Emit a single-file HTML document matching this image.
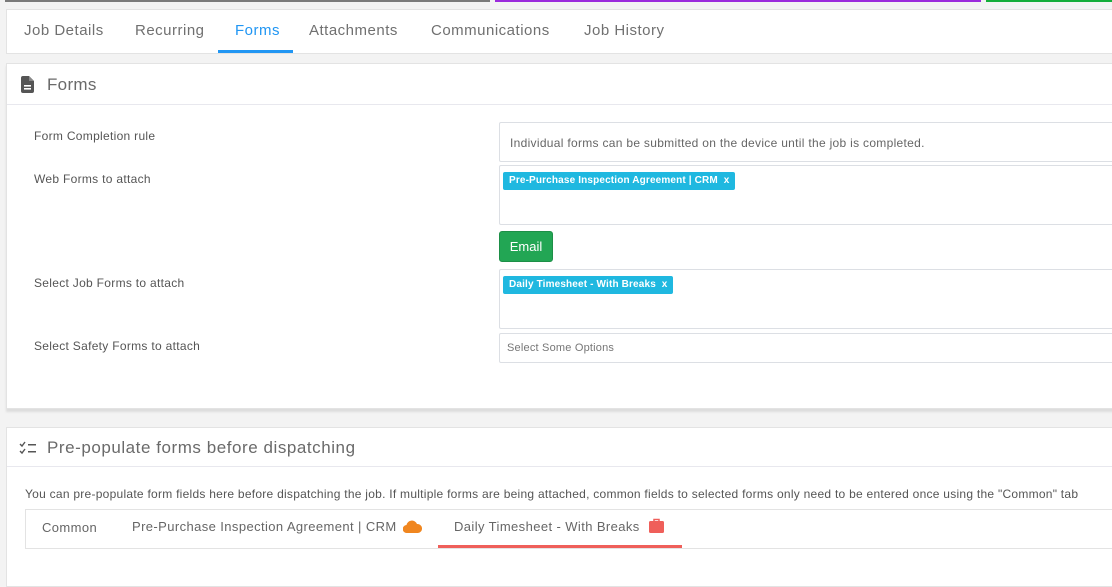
<!DOCTYPE html>
<html><head><style>
*{margin:0;padding:0;box-sizing:border-box}
body{width:1112px;height:574px;background:#f3f3f3;position:relative;overflow:hidden;font-family:"Liberation Sans",sans-serif}
.a{position:absolute}
.t{font-size:15px;color:#707070;top:22px;white-space:nowrap;letter-spacing:.5px}
.lbl{font-size:12px;color:#555;left:34px;white-space:nowrap;letter-spacing:.3px}
.box{left:499px;width:640px;border:1px solid #dcdfe4;background:#fff;border-radius:2px}
.tag{background:#1fb8e0;color:#fff;font-size:10px;font-weight:bold;height:18px;line-height:18px;padding:0 6px;border-radius:2px;white-space:nowrap;letter-spacing:.15px}
</style></head><body>
<div class="a" style="left:5px;top:0;width:485px;height:2px;background:#7a7a7a"></div>
<div class="a" style="left:495px;top:0;width:486px;height:2px;background:#9b2bdc"></div>
<div class="a" style="left:986px;top:0;width:126px;height:2px;background:#14ad3a"></div>

<div class="a" style="left:6px;top:9px;width:1120px;height:45px;background:#fff;border:1px solid #e3e3e3"></div>
<div class="a t" style="left:24px">Job Details</div>
<div class="a t" style="left:135px">Recurring</div>
<div class="a t" style="left:235px;color:#2196f3">Forms</div>
<div class="a t" style="left:309px">Attachments</div>
<div class="a t" style="left:431px">Communications</div>
<div class="a t" style="left:584px">Job History</div>
<div class="a" style="left:218px;top:50px;width:75px;height:3px;background:#2196f3"></div>

<div class="a" style="left:6px;top:63px;width:1120px;height:346px;background:#fff;border:1px solid #e3e3e3;box-shadow:0 3px 2px #ddd"></div>
<div class="a" style="left:7px;top:104px;width:1110px;height:1px;background:#e8e8ee"></div>
<svg class="a" style="left:21px;top:76px" width="13" height="17" viewBox="0 0 13 17"><path d="M2 0h6l5 5v10a2 2 0 0 1-2 2H2a2 2 0 0 1-2-2V2a2 2 0 0 1 2-2z" fill="#555"/><path d="M8 0v5h5" fill="#888"/><rect x="3" y="9" width="7" height="1.6" fill="#fff"/><rect x="3" y="12" width="7" height="1.6" fill="#fff"/></svg>
<div class="a" style="left:47px;top:75px;font-size:17px;color:#6a6a6a;letter-spacing:.3px">Forms</div>

<div class="a lbl" style="top:129px">Form Completion rule</div>
<div class="a lbl" style="top:172px">Web Forms to attach</div>
<div class="a lbl" style="top:276px">Select Job Forms to attach</div>
<div class="a lbl" style="top:339px">Select Safety Forms to attach</div>

<div class="a box" style="top:122px;height:40px"></div>
<div class="a" style="left:510px;top:136px;font-size:12px;color:#666;letter-spacing:.3px;white-space:nowrap">Individual forms can be submitted on the device until the job is completed.</div>
<div class="a box" style="top:165px;height:60px"></div>
<div class="a tag" style="left:503px;top:172px">Pre-Purchase Inspection Agreement | CRM &nbsp;x</div>
<div class="a" style="left:499px;top:231px;width:54px;height:31px;background:#22a654;border:1px solid #1d8f47;border-radius:3px;color:#fff;font-size:13px;line-height:29px;text-align:center">Email</div>
<div class="a box" style="top:269px;height:60px"></div>
<div class="a tag" style="left:503px;top:276px">Daily Timesheet - With Breaks &nbsp;x</div>
<div class="a box" style="top:333px;height:30px"></div>
<div class="a" style="left:507px;top:342px;font-size:11px;color:#777;letter-spacing:.2px">Select Some Options</div>

<div class="a" style="left:6px;top:427px;width:1120px;height:160px;background:#fff;border:1px solid #e3e3e3"></div>
<div class="a" style="left:7px;top:466px;width:1110px;height:1px;background:#e8e8ee"></div>
<svg class="a" style="left:19px;top:441px" width="18" height="14" viewBox="0 0 18 14"><path d="M1 3l2 2 3-4M1 10l2 2 3-4" stroke="#555" stroke-width="1.4" fill="none"/><rect x="9" y="3" width="8" height="1.5" fill="#555"/><rect x="9" y="10" width="8" height="1.5" fill="#555"/></svg>
<div class="a" style="left:47px;top:438px;font-size:17px;color:#6a6a6a;letter-spacing:.55px;white-space:nowrap">Pre-populate forms before dispatching</div>
<div class="a" style="left:25px;top:487px;font-size:12px;color:#555;white-space:nowrap;letter-spacing:.26px">You can pre-populate form fields here before dispatching the job. If multiple forms are being attached, common fields to selected forms only need to be entered once using the "Common" tab</div>
<div class="a" style="left:25px;top:509px;width:1100px;height:40px;border:1px solid #e3e3e3;background:#fff"></div>
<div class="a" style="left:42px;top:520px;font-size:13px;color:#666;letter-spacing:.4px">Common</div>
<div class="a" style="left:132px;top:519px;font-size:13px;color:#666;white-space:nowrap;letter-spacing:.4px">Pre-Purchase Inspection Agreement | CRM</div>
<svg class="a" style="left:403px;top:520px" width="19" height="13" viewBox="0 0 19 13"><path d="M4 13a4 4 0 0 1-.5-8A5.5 5.5 0 0 1 14 4a4.5 4.5 0 0 1 1 9z" fill="#f0861f"/></svg>
<div class="a" style="left:454px;top:519px;font-size:13px;color:#666;white-space:nowrap;letter-spacing:.4px">Daily Timesheet - With Breaks</div>
<svg class="a" style="left:649px;top:518px" width="15" height="15" viewBox="0 0 15 15"><path d="M5 3V1.5h5V3" stroke="#ef5f5a" stroke-width="1.5" fill="none"/><rect x="0" y="3" width="15" height="12" rx="1.5" fill="#ef5f5a"/></svg>
<div class="a" style="left:438px;top:545px;width:244px;height:3px;background:#ef5f5a"></div>
</body></html>
